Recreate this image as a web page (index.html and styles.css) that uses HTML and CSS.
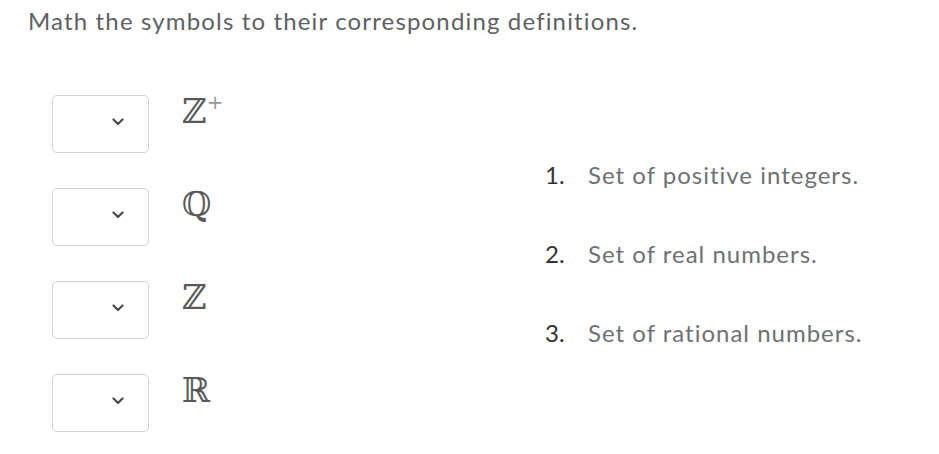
FILE: index.html
```html
<!DOCTYPE html>
<html lang="en">
<head>
    <meta charset="UTF-8">
    <meta name="viewport" content="width=device-width, initial-scale=1.0">
    <title>Matching question</title>
    <link rel="stylesheet" href="styles.css">
</head>
<body>
    <div class="question">
        <p class="prompt">Math the symbols to their corresponding definitions.</p>

        <div class="match">
            <div class="choices">
                <div class="row">
                    <div class="select">
                        <svg class="chevron" width="12" height="8" viewBox="0 0 12 8"><path d="M1.5 1.5 L6 6 L10.5 1.5" fill="none" stroke="#494c4e" stroke-width="2.2" stroke-linecap="round" stroke-linejoin="round"/></svg>
                    </div>
                    <span class="symbol">ℤ<sup>+</sup></span>
                </div>
                <div class="row">
                    <div class="select">
                        <svg class="chevron" width="12" height="8" viewBox="0 0 12 8"><path d="M1.5 1.5 L6 6 L10.5 1.5" fill="none" stroke="#494c4e" stroke-width="2.2" stroke-linecap="round" stroke-linejoin="round"/></svg>
                    </div>
                    <span class="symbol">ℚ</span>
                </div>
                <div class="row">
                    <div class="select">
                        <svg class="chevron" width="12" height="8" viewBox="0 0 12 8"><path d="M1.5 1.5 L6 6 L10.5 1.5" fill="none" stroke="#494c4e" stroke-width="2.2" stroke-linecap="round" stroke-linejoin="round"/></svg>
                    </div>
                    <span class="symbol">ℤ</span>
                </div>
                <div class="row">
                    <div class="select">
                        <svg class="chevron" width="12" height="8" viewBox="0 0 12 8"><path d="M1.5 1.5 L6 6 L10.5 1.5" fill="none" stroke="#494c4e" stroke-width="2.2" stroke-linecap="round" stroke-linejoin="round"/></svg>
                    </div>
                    <span class="symbol">ℝ</span>
                </div>
            </div>

            <ol class="defs">
                <li><span class="num">1.</span>Set of positive integers.</li>
                <li><span class="num">2.</span>Set of real numbers.</li>
                <li><span class="num">3.</span>Set of rational numbers.</li>
            </ol>
        </div>
    </div>
</body>
</html>
```

FILE: styles.css
```css
body {
    margin: 0;
    background: #fff;
    font-family: Lato, "Open Sans", sans-serif;
    font-variant-ligatures: none;
}
.question {
    padding: 6px 0 0 28px;
}
.prompt {
    margin: 0;
    font-size: 24px;
    letter-spacing: 1.15px;
    color: #5e6164;
}
.match {
    display: flex;
    margin-top: 60px;
}
.choices {
    display: flex;
    flex-direction: column;
    gap: 35px;
    width: 493px;
    margin-left: 24px;
}
.row {
    display: flex;
    align-items: flex-start;
}
.select {
    width: 97px;
    height: 58px;
    box-sizing: border-box;
    border: 1px solid #cfd3d5;
    border-radius: 5px;
    display: flex;
    align-items: center;
    justify-content: flex-end;
    padding-right: 24px;
}
.chevron {
    display: block;
    margin-top: -4px;
}
.symbol {
    margin: -1px 0 0 33px;
    font-family: "DejaVu Serif", serif;
    font-size: 34px;
    line-height: 1;
    color: #595959;
}
.symbol sup {
    font-family: "DejaVu Sans", sans-serif;
    font-size: 20px;
    vertical-align: 14px;
    line-height: 0;
    color: #999;
}
.defs {
    list-style: none;
    margin: 65px 0 0 0;
    padding: 0;
    display: flex;
    flex-direction: column;
    gap: 49px;
}
.defs li {
    font-size: 24px;
    line-height: 30px;
    letter-spacing: 1px;
    color: #6e7173;
}
.num {
    display: inline-block;
    width: 43px;
    letter-spacing: 0;
    color: #333;
}
```
